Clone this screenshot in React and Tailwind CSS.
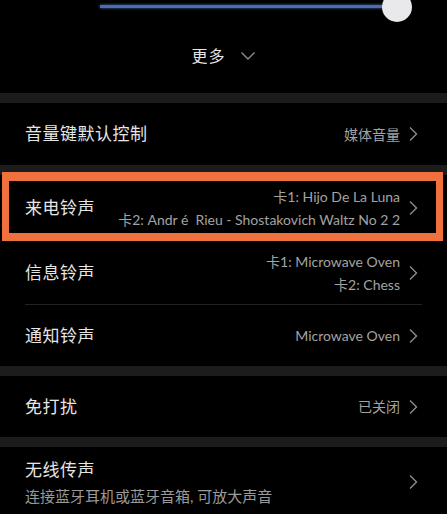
import React from 'react';

const cjk = { fontFamily: 'Lato, "Noto Sans CJK SC", sans-serif' };

const Chevron = () => (
    <svg width="10" height="16" viewBox="0 0 10 16" className="shrink-0 ml-[8px]">
        <path d="M2 1.5 L8.5 8 L2 14.5" fill="none" stroke="#8c8c8c" strokeWidth="1.4" />
    </svg>
);

const Band = () => <div className="h-[10px] bg-[#1c1c1c]" />;

const Row = ({ title, sub, right, h }) => (
    <div className={`flex items-center pl-[25px] pr-[29px] ${h}`}>
        <div className="flex-1 min-w-0">
            <div className="text-[17px] text-[#e6e6e6] tracking-[0.5px] leading-[24px]">{title}</div>
            {sub && <div className="text-[15px] text-[#9a9a9a] leading-[22px] mt-[3px]">{sub}</div>}
        </div>
        {right && (
            <div className="text-right text-[14px] text-[#a3a3a3] leading-[23px]">
                {right.map((t, i) => <div key={i} className="whitespace-pre">{t}</div>)}
            </div>
        )}
        <Chevron />
    </div>
);

export default function App() {
    return (
        <div className="w-[447px] h-[514px] bg-black overflow-hidden" style={cjk}>
            {/* slider */}
            <div className="relative h-[14px]">
                <div className="absolute left-[100px] right-[50px] top-[5px] h-[3px] bg-[#4a6cb0] shadow-[0_0_3px_#4a6cb0]" />
                <div className="absolute left-[382px] top-[-8px] w-[30px] h-[30px] rounded-full bg-[#e9e9eb]" />
            </div>

            <div className="flex items-center justify-center h-[79px] pt-[4px]">
                <span className="text-[16px] text-[#e6e6e6] tracking-[1px]">更多</span>
                <svg width="16" height="10" viewBox="0 0 16 10" className="ml-[14px]">
                    <path d="M1.5 1.5 L8 8 L14.5 1.5" fill="none" stroke="#8c8c8c" strokeWidth="1.4" />
                </svg>
            </div>

            <Band />
            <Row title="音量键默认控制" right={['媒体音量']} h="h-[62px]" />
            <Band />

            <div className="relative">
                <Row
                    title="来电铃声"
                    right={['卡1: Hijo De La Luna', '卡2: Andr é  Rieu - Shostakovich Waltz No 2 2']}
                    h="h-[66px]"
                />
                <div className="absolute left-[2px] right-[4px] top-[-3px] bottom-0 border-[#f0703e] border-x-[7px] border-t-[9px] border-b-[8px] pointer-events-none" />
            </div>

            <Row title="信息铃声" right={['卡1: Microwave Oven', '卡2: Chess']} h="h-[63px]" />
            <div className="mx-[25px] h-px bg-[#222]" />
            <Row title="通知铃声" right={['Microwave Oven']} h="h-[61px]" />
            <Band />
            <Row title="免打扰" right={['已关闭']} h="h-[61px]" />
            <Band />
            <Row title="无线传声" sub="连接蓝牙耳机或蓝牙音箱, 可放大声音" h="h-[70px]" />
        </div>
    );
}
